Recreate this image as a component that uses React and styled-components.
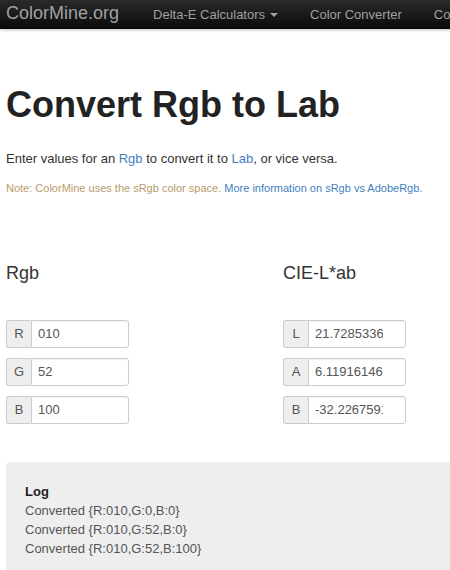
import React from 'react'
import styled, { createGlobalStyle } from 'styled-components'

const GlobalStyle = createGlobalStyle`
	html, body {
		margin: 0;
		padding: 0;
		overflow: hidden;
		background: #fff;
	}
	body {
		font-family: "Liberation Sans", Arial, sans-serif;
		font-size: 13px;
		line-height: 18px;
		color: #333;
	}
`

const NavBar = styled.nav`
	display: flex;
	align-items: center;
	height: 29px;
	width: 1000px;
	background-image: linear-gradient(to bottom, #2a2a2a, #0a0a0a);
	box-shadow: 0 1px 3px rgba(0, 0, 0, 0.25);
	white-space: nowrap;
`

const Brand = styled.a`
	padding: 0 19px 3px 6px;
	font-size: 18px;
	line-height: 20px;
	color: #a0a0a0;
	text-decoration: none;
`

const NavItem = styled.a`
	display: flex;
	align-items: center;
	padding: 0 15px 0 ${(p) => (p.$first ? '15px' : '17px')};
	font-size: 13px;
	color: #a0a0a0;
	text-decoration: none;
`

const Caret = styled.span`
	display: inline-block;
	margin-left: 5px;
	margin-top: 1px;
	border-top: 4px solid #a0a0a0;
	border-left: 4px solid transparent;
	border-right: 4px solid transparent;
`

const Page = styled.main`
	width: 1000px;
	padding-left: 6px;
`

const Title = styled.h1`
	margin: 56px 0 0;
	font-size: 36px;
	line-height: 39.6px;
	font-weight: bold;
	color: #222;
`

const Lead = styled.p`
	margin: 25px 0 0;
	font-size: 13px;
	line-height: 18px;
	color: #333;
`

const Note = styled.p`
	margin: 12px 0 0;
	font-size: 11px;
	line-height: 16px;
	color: #b99b6b;
`

const Link = styled.a`
	color: #3f7fbf;
	text-decoration: none;
`

const Columns = styled.div`
	display: grid;
	grid-template-columns: 277px 277px;
	margin-top: 67px;
`

const ColumnTitle = styled.h3`
	margin: 0 0 37px;
	font-size: 18px;
	line-height: 20px;
	font-weight: normal;
	color: #333;
`

const Fields = styled.div`
	display: flex;
	flex-direction: column;
	gap: 10px;
`

const InputGroup = styled.div`
	display: flex;
	width: 123px;
	height: 28px;
	box-sizing: border-box;
`

const Addon = styled.span`
	display: flex;
	align-items: center;
	justify-content: center;
	width: 25px;
	box-sizing: border-box;
	border: 1px solid #ccc;
	border-right: 0;
	border-radius: 3px 0 0 3px;
	background: #eee;
	color: #555;
	font-size: 13px;
`

const Field = styled.input`
	flex: 1;
	min-width: 0;
	box-sizing: border-box;
	height: 28px;
	margin: 0;
	padding: 0 22px 0 6px;
	border: 1px solid #ccc;
	border-radius: 0 3px 3px 0;
	font-family: "Liberation Sans", Arial, sans-serif;
	font-size: 13px;
	color: #555;
	background: #fff;
	box-shadow: inset 0 1px 1px rgba(0, 0, 0, 0.05);
	outline: none;
`

const Well = styled.section`
	margin-top: 38px;
	padding: 20px 19px;
	min-height: 200px;
	background: #eee;
	border-radius: 4px;
	font-size: 13px;
	line-height: 19px;
	color: #555;
`

const LogTitle = styled.div`
	font-weight: bold;
	color: #222;
`

const rgb = [
	['R', '010'],
	['G', '52'],
	['B', '100'],
]

const lab = [
	['L', '21.72853361'],
	['A', '6.119161461'],
	['B', '-32.22675911'],
]

const log = ['{R:010,G:0,B:0}', '{R:010,G:52,B:0}', '{R:010,G:52,B:100}']

const FieldList = ({ items }) => (
	<Fields>
		{items.map(([label, value]) => (
			<InputGroup key={label}>
				<Addon>{label}</Addon>
				<Field defaultValue={value} readOnly />
			</InputGroup>
		))}
	</Fields>
)

export default function App() {
	return (
		<>
			<GlobalStyle />
			<NavBar>
				<Brand href="#">ColorMine.org</Brand>
				<NavItem href="#" $first>
					Delta-E Calculators
					<Caret />
				</NavItem>
				<NavItem href="#">Color Converter</NavItem>
				<NavItem href="#">Color Palettes</NavItem>
			</NavBar>
			<Page>
				<Title>Convert Rgb to Lab</Title>
				<Lead>
					Enter values for an <Link href="#">Rgb</Link> to convert it to{' '}
					<Link href="#">Lab</Link>, or vice versa.
				</Lead>
				<Note>
					Note: ColorMine uses the sRgb color space.{' '}
					<Link href="#">More information on sRgb vs AdobeRgb.</Link>
				</Note>
				<Columns>
					<div>
						<ColumnTitle>Rgb</ColumnTitle>
						<FieldList items={rgb} />
					</div>
					<div>
						<ColumnTitle>CIE-L*ab</ColumnTitle>
						<FieldList items={lab} />
					</div>
				</Columns>
				<Well>
					<LogTitle>Log</LogTitle>
					{log.map((entry) => (
						<div key={entry}>Converted {entry}</div>
					))}
				</Well>
			</Page>
		</>
	)
}
